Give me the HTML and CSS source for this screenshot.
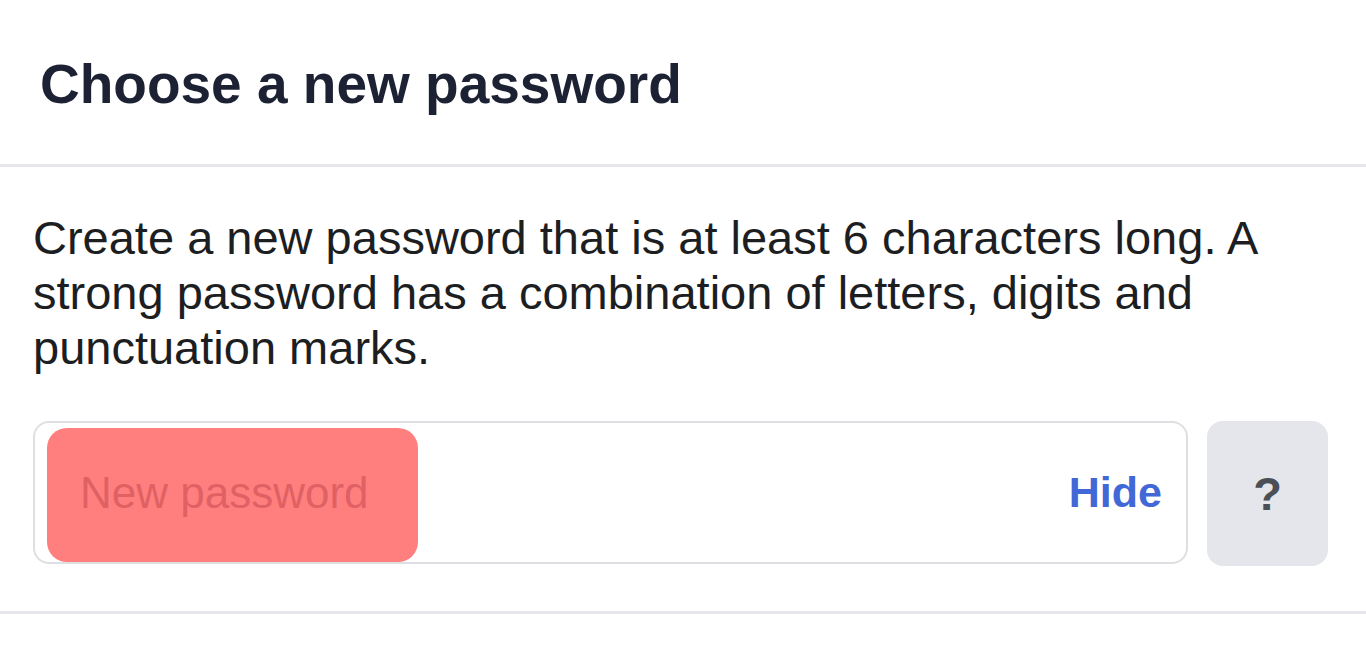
FILE: index.html
```html
<!DOCTYPE html>
<html lang="en">
<head>
<meta charset="utf-8">
<title>Choose a new password</title>
<link rel="stylesheet" href="styles.css">
</head>
<body>
<div class="card">
  <div class="card-header">
    <h1 class="title">Choose a new password</h1>
  </div>
  <div class="card-body">
    <p class="hint">Create a new password that is at least 6 characters long. A strong password has a combination of letters, digits and punctuation marks.</p>
    <div class="field-row">
      <div class="field">
        <input class="field-input" type="text" placeholder="New password">
        <a class="toggle" href="#">Hide</a>
        <div class="highlight"></div>
      </div>
      <button class="help" type="button">?</button>
    </div>
  </div>
</div>
</body>
</html>
```
FILE: styles.css
```css
html, body {
  margin: 0;
  padding: 0;
  background: #ffffff;
}
body {
  font-family: "Liberation Sans", Arial, Helvetica, sans-serif;
  color: #1c1e21;
}
.card-header {
  padding: 51px 0 47px 40px;
  border-bottom: 3px solid #e6e7ea;
}
.title {
  margin: 0;
  font-size: 55px;
  line-height: 66px;
  font-weight: bold;
  color: #1c2233;
}
.card-body {
  padding: 43px 38px 45px 33px;
  border-bottom: 3px solid #e6e7ea;
}
.hint {
  margin: 0 0 46px 0;
  font-size: 47px;
  line-height: 55px;
  color: #1c1e21;
}
.field-row {
  display: flex;
  align-items: flex-start;
  gap: 19px;
}
.field {
  position: relative;
  flex: 1;
  height: 139px;
  border: 2px solid #dddfe2;
  border-radius: 16px;
  display: flex;
  align-items: center;
  padding: 0 24px 0 45px;
}
.field-input {
  flex: 1;
  min-width: 0;
  border: none;
  outline: none;
  background: transparent;
  font-family: "Liberation Sans", Arial, Helvetica, sans-serif;
  font-size: 44px;
  padding: 0;
  color: #1c1e21;
}
.field-input::placeholder {
  color: #bec3c9;
  opacity: 1;
}
.toggle {
  font-size: 43px;
  font-weight: bold;
  color: #4168d6;
  text-decoration: none;
}
.highlight {
  position: absolute;
  left: 12px;
  top: 5px;
  width: 371px;
  height: 134px;
  border-radius: 20px;
  background: rgba(255, 0, 0, 0.5);
  pointer-events: none;
}
.help {
  width: 121px;
  height: 145px;
  border: none;
  border-radius: 16px;
  background: #e4e6eb;
  color: #4b4f56;
  font-family: "Liberation Sans", Arial, Helvetica, sans-serif;
  font-size: 47px;
  font-weight: bold;
  padding: 0;
}
```
